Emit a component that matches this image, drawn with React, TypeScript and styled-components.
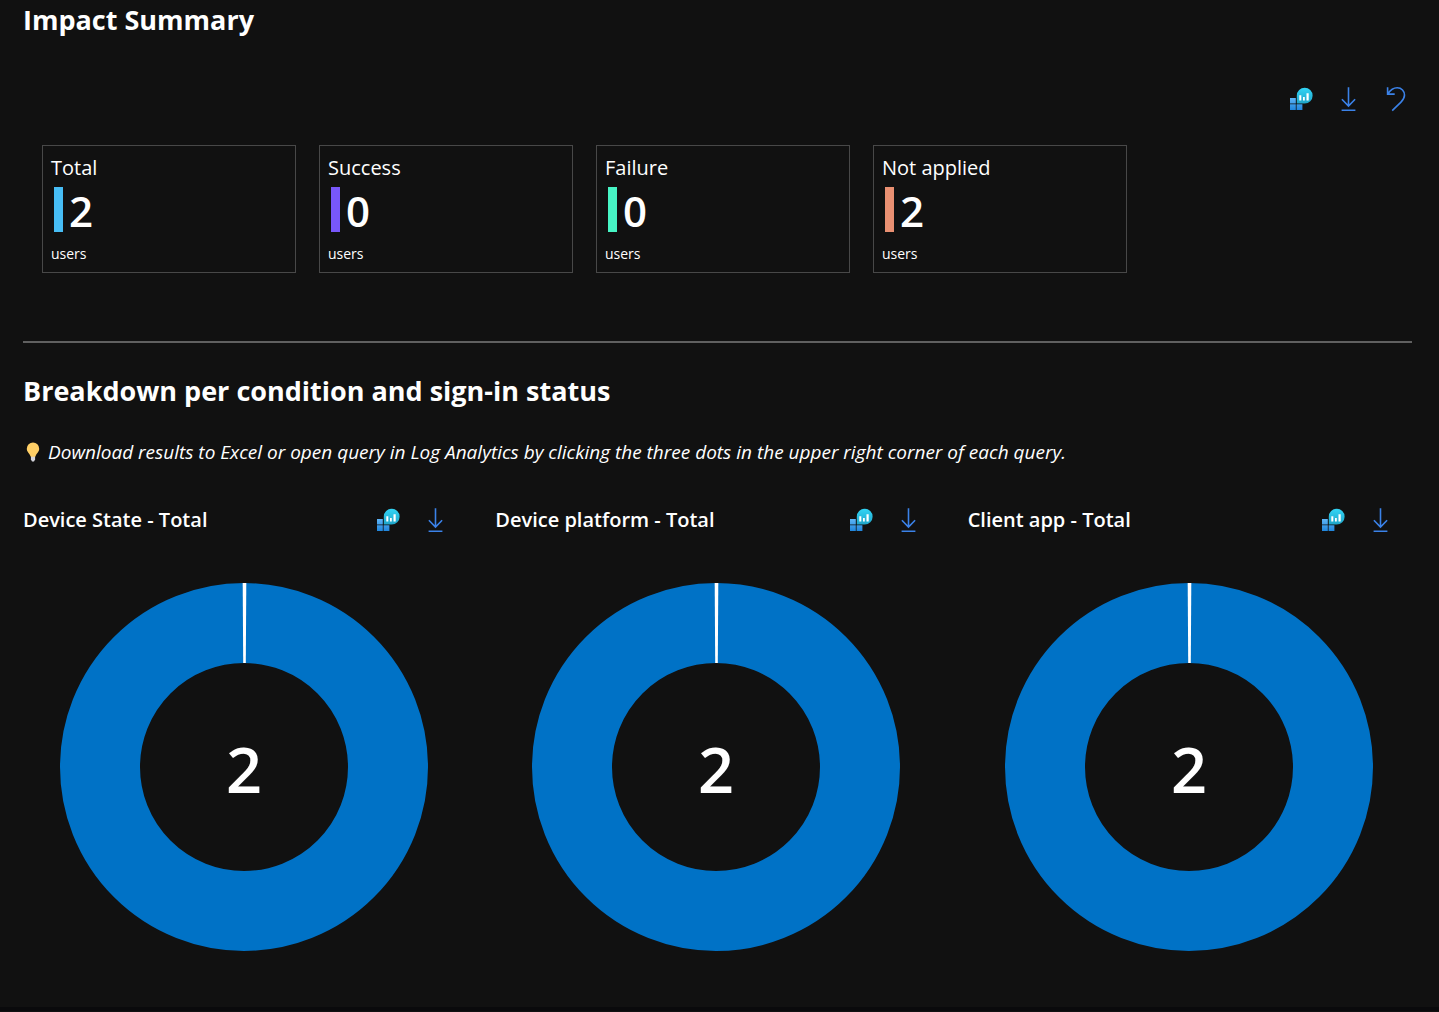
import React from "react";
import styled, { createGlobalStyle } from "styled-components";

const GlobalStyle = createGlobalStyle`
  * { box-sizing: border-box; }
  html { background: #111111; }
  body {
    margin: 0;
    background: #111111;
    color: #ffffff;
    font-family: "Segoe UI", "Open Sans", "Noto Sans", sans-serif;
  }
`;

const Page = styled.main`
  padding: 0 27px 56px 23px;
  border-bottom: 4px solid #0a0a0c;
`;

const Heading = styled.h2`
  margin: 0;
  font-size: 27px;
  line-height: 40px;
  font-weight: 700;
`;

const Toolbar = styled.div`
  display: flex;
  justify-content: flex-end;
  gap: 16px;
`;

const SummaryToolbar = styled(Toolbar)`
  margin-top: 43px;
`;

const IconButton = styled.button`
  display: block;
  width: 32px;
  height: 32px;
  padding: 0;
  border: 0;
  background: none;
  cursor: pointer;

  svg { display: block; }
`;

const Cards = styled.div`
  display: flex;
  flex-wrap: wrap;
  gap: 23px;
  padding: 30px 19px 68px;
`;

const Card = styled.article`
  width: 254px;
  padding: 8px;
  border: 1px solid #484848;
`;

const CardTitle = styled.h3`
  margin: 0;
  font-size: 20px;
  line-height: 28px;
  font-weight: 400;
`;

const CardValue = styled.div<{ $color: string }>`
  height: 45px;
  margin: 5px 3px 12px;
  padding-left: 6px;
  border-left: 9px solid ${(p) => p.$color};
  font-size: 42px;
  line-height: 47px;
  font-weight: 600;
`;

const CardUnit = styled.div`
  font-size: 14px;
  line-height: 20px;
`;

const Rule = styled.hr`
  height: 2px;
  margin: 0 0 28px;
  border: 0;
  background: #606060;
`;

const Tip = styled.p`
  display: flex;
  align-items: center;
  gap: 5px;
  margin: 27px 0 38px;
  font-size: 19px;
  line-height: 28px;
  font-style: italic;
`;

const Charts = styled.div`
  display: grid;
  grid-template-columns: repeat(3, minmax(0, 1fr));
  gap: 30px;
  padding-right: 2px;
`;

const ChartHeader = styled.header`
  display: flex;
  align-items: center;
  justify-content: space-between;
  padding-right: 14px;
`;

const ChartTitle = styled.h3`
  margin: 0;
  font-size: 20px;
  line-height: 32px;
  font-weight: 600;
`;

const Donut = styled.svg`
  display: block;
  width: 368px;
  max-width: 100%;
  margin: 47px auto 0;
`;

const DonutValue = styled.text`
  fill: #ffffff;
  font-size: 63px;
  font-weight: 600;
  text-anchor: middle;
`;

const blue = "#3b82e8";

function LogsButton({ id }: { id: string }) {
  return (
    <IconButton type="button" aria-label="Open query in Log Analytics">
      <svg width="32" height="32" viewBox="0 0 32 32">
        <defs>
          <linearGradient id={`${id}-balloon`} x1="0" y1="0" x2="0" y2="1">
            <stop offset="0" stopColor="#32d4f5" />
            <stop offset="1" stopColor="#1fa5c9" />
          </linearGradient>
          <linearGradient id={`${id}-tile`} x1="0" y1="0" x2="0" y2="1">
            <stop offset="0" stopColor="#5eb4f6" />
            <stop offset="1" stopColor="#1f85dc" />
          </linearGradient>
        </defs>
        <path
          fill={`url(#${id}-tile)`}
          d="M6 15h5.8v5.6H6zM6 21.3h5.8v5.8H6zM12.6 21.3h5.8v5.8h-5.8z"
        />
        <path
          fill={`url(#${id}-balloon)`}
          d="M12.8 20.6v-7.9a7.9 7.9 0 1 1 7.9 7.9z"
        />
        <path fill="#ffffff" d="M15.3 12.3h2v5.3h-2zM19 14h1.8v3.6H19zM22.5 10.2h2.2v7.4h-2.2z" />
      </svg>
    </IconButton>
  );
}

function DownloadButton() {
  return (
    <IconButton type="button" aria-label="Download results">
      <svg width="32" height="32" viewBox="0 0 32 32" fill="none" stroke={blue} strokeWidth="1.6">
        <path d="M16.5 4.3V23M9.9 16.2l6.6 6.9 6.6-6.9M9.6 27.2h13.8" />
      </svg>
    </IconButton>
  );
}

function UndoButton() {
  return (
    <IconButton type="button" aria-label="Reset">
      <svg width="32" height="32" viewBox="0 0 32 32" fill="none" stroke={blue} strokeWidth="1.6">
        <path d="M7.6 4.3v6.8h7.1M7.9 10.8C10.4 7 13.4 4.8 17.2 4.8c4.5 0 7.3 3.5 7.3 7.3 0 3-1.3 4.8-3.5 7L12.2 27.6" />
      </svg>
    </IconButton>
  );
}

function Bulb() {
  return (
    <svg width="20" height="22" viewBox="0 0 20 22" aria-hidden="true">
      <path fill="#d5d5dc" d="M7.9 15h4.2v3.6L11 20.4H9l-1.1-1.8z" />
      <path
        fill="#ffcf66"
        d="M10 1.5a6.2 6.2 0 0 0-6.2 6.2c0 3.4 2.9 4.5 3.6 7.4.1.5.4.7.8.7h3.6c.4 0 .7-.2.8-.7.7-2.9 3.6-4 3.6-7.4A6.2 6.2 0 0 0 10 1.5z"
      />
    </svg>
  );
}

const stats = [
  { label: "Total", value: 2, color: "#47bdf5" },
  { label: "Success", value: 0, color: "#7857fa" },
  { label: "Failure", value: 0, color: "#47f5c5" },
  { label: "Not applied", value: 2, color: "#e99072" },
];

const charts = [
  { id: "state", title: "Device State - Total", value: 2 },
  { id: "platform", title: "Device platform - Total", value: 2 },
  { id: "client", title: "Client app - Total", value: 2 },
];

export default function App() {
  return (
    <>
      <GlobalStyle />
      <Page>
        <Heading>Impact Summary</Heading>
        <SummaryToolbar>
          <LogsButton id="summary" />
          <DownloadButton />
          <UndoButton />
        </SummaryToolbar>
        <Cards>
          {stats.map((s) => (
            <Card key={s.label}>
              <CardTitle>{s.label}</CardTitle>
              <CardValue $color={s.color}>{s.value}</CardValue>
              <CardUnit>users</CardUnit>
            </Card>
          ))}
        </Cards>
        <Rule />
        <Heading>Breakdown per condition and sign-in status</Heading>
        <Tip>
          <Bulb />
          <span>
            Download results to Excel or open query in Log Analytics by clicking the three dots in
            the upper right corner of each query.
          </span>
        </Tip>
        <Charts>
          {charts.map((c) => (
            <section key={c.id}>
              <ChartHeader>
                <ChartTitle>{c.title}</ChartTitle>
                <Toolbar>
                  <LogsButton id={c.id} />
                  <DownloadButton />
                </Toolbar>
              </ChartHeader>
              <Donut viewBox="0 0 368 368" role="img" aria-label={c.title}>
                <circle cx="184" cy="184" r="144" fill="none" stroke="#0072c6" strokeWidth="80" />
                <path d="M182.7 0h3.6l-.5 80h-2.6z" fill="#ffffff" />
                <DonutValue x="184" y="210">{c.value}</DonutValue>
              </Donut>
            </section>
          ))}
        </Charts>
      </Page>
    </>
  );
}
